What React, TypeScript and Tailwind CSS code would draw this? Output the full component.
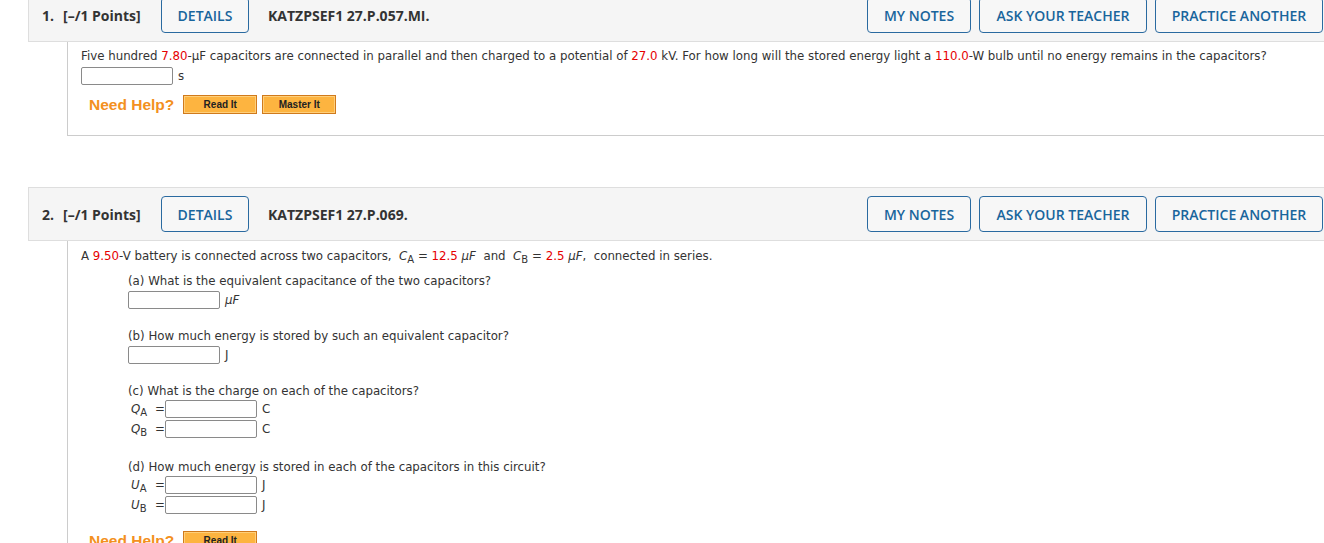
import React from "react";

const HEAD = "font-['Open_Sans','Liberation_Sans',sans-serif]";
const BODY = "font-['DejaVu_Sans','Liberation_Sans',sans-serif]";

function OutlineButton({ children, className = "" }: { children: React.ReactNode; className?: string }) {
  return (
    <button
      className={`flex h-[36px] items-center justify-center rounded-[4px] border border-[#2a6aa0] bg-[#f7f7f7] text-[14px] font-semibold text-[#19659c] ${className}`}
    >
      {children}
    </button>
  );
}

function QuestionHeader({ num, code }: { num: number; code: string }) {
  return (
    <div
      className={`flex h-[54px] items-center justify-between border border-r-0 border-[#dedede] bg-[#f5f5f5] pl-[13px] pr-px ${HEAD}`}
    >
      <div className="flex items-center text-[14px] font-bold text-[#333]">
        <span className="w-[21px]">{num}.</span>
        <span className="w-[80px] whitespace-nowrap">[–/1 Points]</span>
        <OutlineButton className="ml-[18px] w-[88px]">DETAILS</OutlineButton>
        <span className="ml-[19px]">{code}</span>
      </div>
      <div className="flex gap-[8px]">
        <OutlineButton className="w-[104px]">MY NOTES</OutlineButton>
        <OutlineButton className="w-[168px]">ASK YOUR TEACHER</OutlineButton>
        <OutlineButton className="w-[168px]">PRACTICE ANOTHER</OutlineButton>
      </div>
    </div>
  );
}

function AnswerBox() {
  return <span className="inline-block h-[18px] w-[92px] rounded-[2px] border border-[#8a8a8a] bg-white align-middle" />;
}

function Red({ children }: { children: React.ReactNode }) {
  return <span className="text-[#e60000]">{children}</span>;
}

function Sym({ v, s }: { v: string; s: string }) {
  return (
    <span className="whitespace-nowrap">
      <span className="italic">{v}</span>
      <span className="relative top-[3px] text-[10px]">{s}</span>
    </span>
  );
}

function HelpRow({ master = true }: { master?: boolean }) {
  return (
    <div className="ml-[8px] flex items-center">
      <span className="font-['Liberation_Sans',sans-serif] text-[15.5px] font-bold text-[#f39021]">Need Help?</span>
      <span className="ml-[9px] flex gap-[5px] font-['Liberation_Sans',sans-serif] text-[10px] font-bold text-[#222]">
        <span className="flex h-[19px] w-[74px] items-center justify-center border border-[#d07a1c] bg-[#fdb440] shadow-[inset_0_0_0_1px_#ffcf7a]">
          Read It
        </span>
        {master && (
          <span className="flex h-[19px] w-[74px] items-center justify-center border border-[#d07a1c] bg-[#fdb440] shadow-[inset_0_0_0_1px_#ffcf7a]">
            Master It
          </span>
        )}
      </span>
    </div>
  );
}

function Labeled({ v, s, unit }: { v: string; s: string; unit: string }) {
  return (
    <div className="flex h-[20px] items-center">
      <span className="ml-[3px] w-[24px]">
        <Sym v={v} s={s} />
      </span>
      <span className="w-[10px]">=</span>
      <AnswerBox />
      <span className="ml-[5px]">{unit}</span>
    </div>
  );
}

export default function App() {
  return (
    <div className="h-[543px] w-[1324px] overflow-hidden bg-white">
      <div className="ml-[28px] mt-[-12px]">
        <QuestionHeader num={1} code="KATZPSEF1 27.P.057.MI." />
        <div className={`ml-[39px] h-[94px] border-b border-l border-[#cccccc] pl-[13px] pt-[6px] text-[11.8px] leading-[16px] text-[#333] ${BODY}`}>
          <p className="whitespace-nowrap">
            Five hundred <Red>7.80</Red>-μF capacitors are connected in parallel and then charged to a potential of{" "}
            <Red>27.0</Red> kV. For how long will the stored energy light a <Red>110.0</Red>-W bulb until no energy
            remains in the capacitors?
          </p>
          <div className="mt-[3px] flex items-center">
            <AnswerBox />
            <span className="ml-[5px]">s</span>
          </div>
          <div className="mt-[10px]">
            <HelpRow />
          </div>
        </div>

        <div className="mt-[51px]">
          <QuestionHeader num={2} code="KATZPSEF1 27.P.069." />
          <div className={`ml-[39px] h-[320px] border-l border-[#cccccc] pl-[13px] pt-[7px] text-[11.8px] leading-[16px] text-[#333] ${BODY}`}>
            <p>
              A <Red>9.50</Red>-V battery is connected across two capacitors,&nbsp; <Sym v="C" s="A" /> = <Red>12.5</Red>{" "}
              <span className="italic">μF</span>&nbsp; and&nbsp; <Sym v="C" s="B" /> = <Red>2.5</Red>{" "}
              <span className="italic">μF</span>,&nbsp; connected in series.
            </p>
            <div className="ml-[47px]">
              <p className="mt-[8px]">(a) What is the equivalent capacitance of the two capacitors?</p>
              <div className="mt-[2px] flex items-center">
                <AnswerBox />
                <span className="ml-[5px] italic">μF</span>
              </div>

              <p className="mt-[19px]">(b) How much energy is stored by such an equivalent capacitor?</p>
              <div className="mt-[2px] flex items-center">
                <AnswerBox />
                <span className="ml-[5px]">J</span>
              </div>

              <p className="mt-[19px]">(c) What is the charge on each of the capacitors?</p>
              <div>
                <Labeled v="Q" s="A" unit="C" />
                <Labeled v="Q" s="B" unit="C" />
              </div>

              <p className="mt-[20px]">(d) How much energy is stored in each of the capacitors in this circuit?</p>
              <div>
                <Labeled v="U" s="A" unit="J" />
                <Labeled v="U" s="B" unit="J" />
              </div>
            </div>
            <div className="mt-[16px]">
              <HelpRow master={false} />
            </div>
          </div>
        </div>
      </div>
    </div>
  );
}
